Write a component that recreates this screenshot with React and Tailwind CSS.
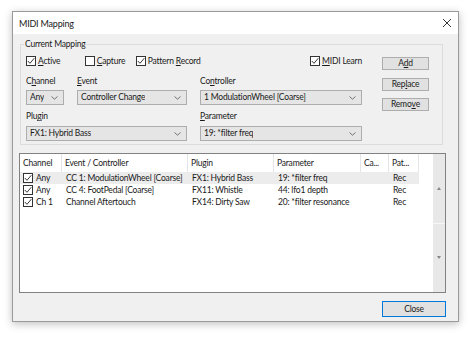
import React from "react";

const font = { fontFamily: 'Lato, "Noto Sans", Arial, sans-serif' };

function U({ children }) {
  return <span className="underline underline-offset-[1px] decoration-[0.5px]">{children}</span>;
}

function Check({ checked = true }) {
  return (
    <span className="w-[10px] h-[10px] border border-[#333] bg-white flex items-center justify-center shrink-0">
      {checked && (
        <svg width="8" height="8" viewBox="0 0 8 8">
          <polyline points="0.8,4 3,6.3 7.3,1.2" fill="none" stroke="#222" strokeWidth="0.9" />
        </svg>
      )}
    </span>
  );
}

function Chevron() {
  return (
    <svg width="7" height="4" viewBox="0 0 7 4" className="shrink-0">
      <polyline points="0.5,0.5 3.5,3.2 6.5,0.5" fill="none" stroke="#555" strokeWidth="0.8" />
    </svg>
  );
}

function Combo({ value, className }) {
  return (
    <div className={`h-[15px] bg-[#e5e5e5] border border-[#adadad] flex items-center justify-between pl-[3px] pr-[5px] ${className}`}>
      <span className="truncate">{value}</span>
      <Chevron />
    </div>
  );
}

function Btn({ children }) {
  return (
    <div className="w-[47px] h-[13px] bg-[#e1e1e1] border border-[#adadad] flex items-center justify-center">
      {children}
    </div>
  );
}

const cols = [
  ["Channel", "w-[42px]"],
  ["Event / Controller", "w-[126px]"],
  ["Plugin", "w-[86px]"],
  ["Parameter", "w-[87px]"],
  ["Ca...", "w-[28px]"],
  ["Pat...", "w-[30px]"],
];

const rows = [
  ["Any", "CC 1: ModulationWheel [Coarse]", "FX1: Hybrid Bass", "19: *filter freq", "", "Rec"],
  ["Any", "CC 4: FootPedal [Coarse]", "FX11: Whistle", "44: lfo1 depth", "", "Rec"],
  ["Ch 1", "Channel Aftertouch", "FX14: Dirty Saw", "20: *filter resonance", "", "Rec"],
];

export default function App() {
  return (
    <div className="w-[474px] h-[338px] bg-white overflow-hidden text-[8.5px] tracking-[-0.2px] leading-[11px] text-[#1a1a1a] whitespace-nowrap" style={font}>
      <div className="mt-[11px] ml-[12px] w-[447px] h-[311px] border border-[#9a9a9a] bg-[#f0f0f0] flex flex-col shadow-[0_2px_8px_rgba(0,0,0,0.25)]">
        <div className="h-[22px] bg-white flex items-center justify-between pl-[6px] pr-[6px] shrink-0">
          <span className="text-[9px]">MIDI Mapping</span>
          <svg width="10" height="10" viewBox="0 0 10 10">
            <path d="M1 1 L9 9 M9 1 L1 9" stroke="#222" strokeWidth="0.9" />
          </svg>
        </div>

        <div className="flex-1 flex flex-col">
          {/* group box */}
          <div className="ml-[7px] mt-[10px] w-[423px] h-[101px] border border-[#dcdcdc]">
            <div className="-mt-[6px] ml-[3px] px-[1px] w-fit bg-[#f0f0f0]">Current Mapping</div>
            <div className="flex pl-[5px]">
              <div className="w-[336px]">
                <div className="mt-[6px] h-[10px] flex items-center">
                  <div className="w-[59px] flex items-center gap-[2px]"><Check /><span><U>A</U>ctive</span></div>
                  <div className="w-[51px] flex items-center gap-[2px]"><Check checked={false} /><span><U>C</U>apture</span></div>
                  <div className="w-[175px] flex items-center gap-[2px]"><Check /><span>Pattern <U>R</U>ecord</span></div>
                  <div className="flex items-center gap-[2px]"><Check /><span><U>M</U>IDI Learn</span></div>
                </div>
                <div className="mt-[10px] h-[11px] flex">
                  <span className="w-[51px]">C<U>h</U>annel</span>
                  <span className="w-[123px]"><U>E</U>vent</span>
                  <span>Co<U>n</U>troller</span>
                </div>
                <div className="mt-[3px] flex gap-[13px]">
                  <Combo value="Any" className="w-[38px]" />
                  <Combo value="Controller Change" className="w-[110px]" />
                  <Combo value="1 ModulationWheel [Coarse]" className="w-[162px]" />
                </div>
                <div className="mt-[6px] h-[11px] flex">
                  <span className="w-[174px]">Plu<U>g</U>in</span>
                  <span><U>P</U>arameter</span>
                </div>
                <div className="mt-[4px] flex gap-[13px]">
                  <Combo value="FX1: Hybrid Bass" className="w-[161px]" />
                  <Combo value="19: *filter freq" className="w-[162px]" />
                </div>
              </div>
              <div className="ml-[20px] flex flex-col">
                <div className="mt-[7px]"><Btn>A<U>d</U>d</Btn></div>
                <div className="mt-[8px]"><Btn>Rep<U>l</U>ace</Btn></div>
                <div className="mt-[7px]"><Btn>Remo<U>v</U>e</Btn></div>
              </div>
            </div>
          </div>

          {/* list */}
          <div className="ml-[6px] mt-[8px] w-[427px] h-[140px] border border-[#828282] flex">
            <div className="flex-1 bg-white">
              <div className="h-[18px] flex">
                {cols.map(([c, w]) => (
                  <div key={c} className={`${w} h-full pl-[3px] flex items-center border-r border-[#e5e5e5]`}>
                    {c}
                  </div>
                ))}
              </div>
              {rows.map((r, i) => (
                <div key={i} className={`h-[12px] flex w-[399px] ${i === 0 ? "bg-[#ececec]" : ""}`}>
                  <div className="w-[42px] pl-[3px] flex items-center gap-[3px]">
                    <Check />
                    <span>{r[0]}</span>
                  </div>
                  <div className="w-[126px] pl-[4px] flex items-center">{r[1]}</div>
                  <div className="w-[86px] pl-[4px] flex items-center">{r[2]}</div>
                  <div className="w-[87px] pl-[4px] flex items-center">{r[3]}</div>
                  <div className="w-[28px] pl-[4px] flex items-center">{r[4]}</div>
                  <div className="w-[30px] pl-[4px] flex items-center">{r[5]}</div>
                </div>
              ))}
            </div>
            <div className="w-[12px] flex flex-col bg-[#e8e8e8]">
              <div className="flex-1 flex items-center justify-center border-b border-[#f7f7f7]">
                <svg width="4" height="3" viewBox="0 0 4 3"><polygon points="2,0 4,3 0,3" fill="#888" /></svg>
              </div>
              <div className="flex-1 flex items-center justify-center">
                <svg width="4" height="3" viewBox="0 0 4 3"><polygon points="0,0 4,0 2,3" fill="#888" /></svg>
              </div>
            </div>
          </div>

          <div className="mt-[8px] mr-[12px] self-end w-[64px] h-[16px] border border-[#0078d7] bg-[#e1e1e1] flex items-center justify-center">
            Close
          </div>
        </div>
      </div>
    </div>
  );
}
